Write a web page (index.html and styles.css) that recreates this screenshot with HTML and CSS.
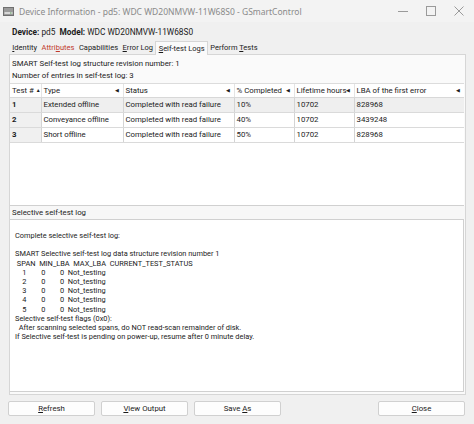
FILE: index.html
```html
<!DOCTYPE html>
<html>
    <head>
        <meta charset="utf-8" />
        <title>Device Information - pd5</title>
        <link rel="stylesheet" href="styles.css">
    </head>
    <body>
        <div class="window">
            <div class="titlebar">
                <svg class="app-icon" width="11" height="11" viewBox="0 0 11 11">
                    <rect x="0.5" y="1.5" width="10" height="8" fill="#9a9a9a" stroke="#6f6f6f"/>
                    <rect x="1.5" y="6" width="8" height="2" fill="#d8d8d8"/>
                    <rect x="7" y="6.5" width="1.5" height="1" fill="#5aa05a"/>
                </svg>
                <span class="title-text">Device Information - pd5: WDC WD20NMVW-11W68S0 - GSmartControl</span>
                <div class="win-controls">
                    <svg width="10" height="10" viewBox="0 0 10 10"><line x1="0" y1="5.5" x2="10" y2="5.5" stroke="#9a9a9a"/></svg>
                    <svg width="10" height="10" viewBox="0 0 10 10"><rect x="0.5" y="0.5" width="9" height="9" fill="none" stroke="#9a9a9a"/></svg>
                    <svg width="10" height="10" viewBox="0 0 10 10"><path d="M0.5 0.5 L9.5 9.5 M9.5 0.5 L0.5 9.5" stroke="#9a9a9a"/></svg>
                </div>
            </div>

            <div class="devline"><b>Device:</b> pd5&nbsp; <b>Model:</b> WDC WD20NMVW-11W68S0</div>

            <div class="tabs">
                <span class="tab"><u>I</u>dentity</span>
                <span class="tab tab-warn">Attri<u>b</u>utes</span>
                <span class="tab">Capabilities</span>
                <span class="tab"><u>E</u>rror Log</span>
                <span class="tab active"><u>S</u>elf-test Logs</span>
                <span class="tab">Perform <u>T</u>ests</span>
            </div>

            <div class="panel">
                <div class="info">
                    <div>SMART Self-test log structure revision number: 1</div>
                    <div>Number of entries in self-test log: 3</div>
                </div>

                <div class="grid-box">
                    <table class="grid">
                        <colgroup>
                            <col class="c-num"><col class="c-type"><col class="c-status">
                            <col class="c-pct"><col class="c-hours"><col>
                        </colgroup>
                        <thead>
                            <tr>
                                <th>Test # <span class="sort-up">&#9650;</span></th>
                                <th>Type <span class="arr">&#9664;</span></th>
                                <th>Status <span class="arr">&#9664;</span></th>
                                <th>% Completed <span class="arr">&#9664;</span></th>
                                <th>Lifetime hours <span class="arr">&#9664;</span></th>
                                <th>LBA of the first error <span class="arr">&#9664;</span></th>
                            </tr>
                        </thead>
                        <tbody>
                            <tr class="sel">
                                <td class="num">1</td><td>Extended offline</td><td>Completed with read failure</td>
                                <td>10%</td><td>10702</td><td>828968</td>
                            </tr>
                            <tr>
                                <td class="num">2</td><td>Conveyance offline</td><td>Completed with read failure</td>
                                <td>40%</td><td>10702</td><td>3439248</td>
                            </tr>
                            <tr>
                                <td class="num">3</td><td>Short offline</td><td>Completed with read failure</td>
                                <td>50%</td><td>10702</td><td>828968</td>
                            </tr>
                        </tbody>
                    </table>
                </div>

                <div class="frame-label">Selective self-test log</div>
                <pre class="log">Complete selective self-test log:

SMART Selective self-test log data structure revision number 1
 SPAN  MIN_LBA  MAX_LBA  CURRENT_TEST_STATUS
    1        0        0  Not_testing
    2        0        0  Not_testing
    3        0        0  Not_testing
    4        0        0  Not_testing
    5        0        0  Not_testing
Selective self-test flags (0x0):
  After scanning selected spans, do NOT read-scan remainder of disk.
If Selective self-test is pending on power-up, resume after 0 minute delay.</pre>
            </div>

            <div class="buttons">
                <button type="button"><u>R</u>efresh</button>
                <button type="button"><u>V</u>iew Output</button>
                <button type="button">Save <u>A</u>s</button>
                <span class="spacer"></span>
                <button type="button"><u>C</u>lose</button>
            </div>
        </div>
    </body>
</html>
```

FILE: styles.css
```css
* {
	padding: 0;
	margin: 0;
	box-sizing: border-box;
}
body {
	background-color: #f0f0f0;
	font-family: Roboto, "Noto Sans", sans-serif;
	font-size: 7.8px;
	color: #1b1b1b;
}
.window {
	width: 474px;
	height: 424px;
	display: flex;
	flex-direction: column;
	background-color: #f0f0f0;
	overflow: hidden;
}
.titlebar {
	height: 22px;
	display: flex;
	align-items: center;
	padding-left: 3px;
	background-color: #f3f3f3;
}
.app-icon {
	margin-right: 5px;
}
.title-text {
	color: #8a8a8a;
	font-family: "Noto Sans", sans-serif;
	font-size: 8.5px;
}
.win-controls {
	margin-left: auto;
	display: flex;
	gap: 18px;
	padding-right: 10px;
}
.devline {
	height: 18px;
	padding: 4px 0 0 12px;
	line-height: 12px;
	font-size: 8.3px;
}
.tabs {
	height: 14px;
	display: flex;
	padding-left: 10px;
	align-items: flex-end;
	font-size: 7.5px;
}
.tab {
	height: 13px;
	line-height: 13px;
	padding: 0 2.3px;
}
.tab-warn {
	color: #c0392b;
}
.tab.active {
	height: 14px;
	background-color: #fafafa;
	border: 1px solid #d6d6d6;
	border-bottom: 0;
	margin-bottom: -1px;
	position: relative;
	z-index: 1;
}
.panel {
	margin: 0 8px 0 9px;
	height: 341px;
	background-color: #fafafa;
	border: 1px solid #d6d6d6;
	display: flex;
	flex-direction: column;
}
.info {
	padding: 3px 0 0 2px;
	line-height: 12px;
	height: 28px;
}
.grid-box {
	height: 123px;
	margin: 0 1px 0 0;
	background-color: #ffffff;
	border-top: 1px solid #dcdcdc;
	border-bottom: 1px solid #d0d0d0;
}
.grid {
	width: 100%;
	border-collapse: collapse;
	table-layout: fixed;
}
.c-num {
	width: 31px;
}
.c-type {
	width: 82px;
}
.c-status {
	width: 111px;
}
.c-pct,
.c-hours {
	width: 60px;
}
.grid th {
	height: 13px;
	font-weight: normal;
	text-align: left;
	padding: 0 2px;
	border-right: 1px solid #e4e4e4;
	border-bottom: 1px solid #d8d8d8;
	white-space: nowrap;
	position: relative;
}
.grid th .arr {
	position: absolute;
	right: 4px;
	top: 3px;
	font-size: 5px;
}
.grid th .sort-up {
	font-size: 5px;
	vertical-align: 1px;
}
.grid td {
	height: 15px;
	padding: 0 2px;
	border-right: 1px solid #d4d4d4;
	border-bottom: 1px solid #dadada;
	white-space: nowrap;
}
.grid td:last-child,
.grid th:last-child {
	border-right: 0;
}
.grid td.num {
	font-weight: bold;
	background-color: #f0f0f0;
}
.grid tr.sel td {
	background-color: #efefef;
}
.frame-label {
	height: 13px;
	line-height: 13px;
	padding-left: 2px;
	background-color: #f7f7f7;
}
.log {
	height: 173px;
	margin: 0 1px 0 0;
	background-color: #ffffff;
	border: 1px solid #d0d0d0;
	border-left: 0;
	font-family: inherit;
	font-size: 7.4px;
	line-height: 9.2px;
	padding: 11px 0 0 5px;
	white-space: pre;
}
.buttons {
	display: flex;
	gap: 6px;
	padding: 6px 9px 0 8px;
}
.buttons button {
	width: 87px;
	height: 15px;
	font-family: inherit;
	font-size: 7.8px;
	color: #1b1b1b;
	background-color: #fdfdfd;
	border: 1px solid #d0d0d0;
	border-radius: 2px;
}
.spacer {
	flex: 1;
}
```
